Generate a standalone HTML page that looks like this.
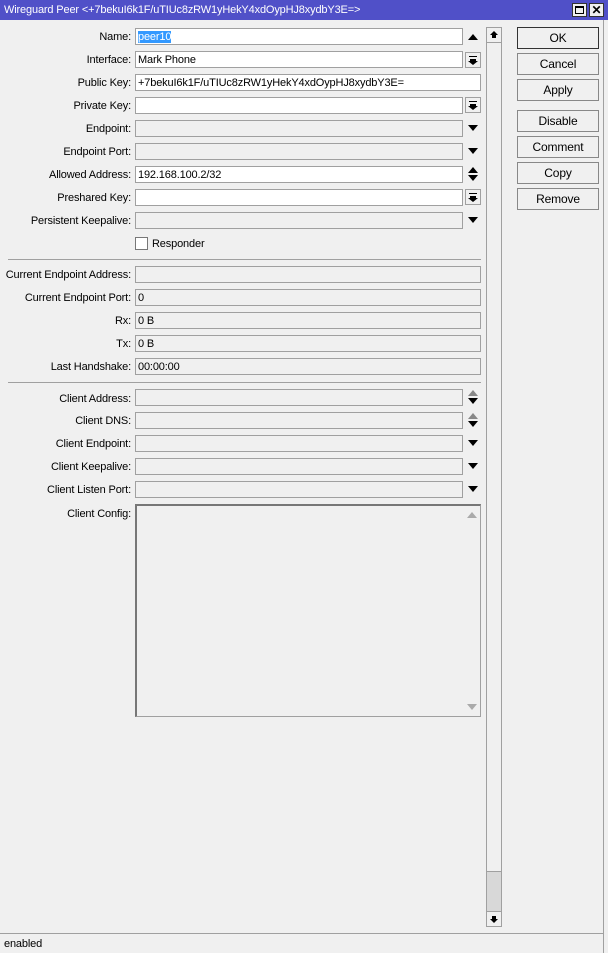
<!DOCTYPE html><html><head><style>
*{margin:0;padding:0;box-sizing:border-box}
body{width:608px;height:953px;background:#f0f0f0;font:11px "Liberation Sans",sans-serif;color:#000;position:relative;overflow:hidden;letter-spacing:-0.15px}
.t{position:absolute;left:0;top:0;width:608px;height:20px;background:#5050c8;color:#fff;padding:4px 0 0 4px;font-size:11px}
.wb{position:absolute;top:3px;width:15px;height:14px;background:#f0f0f0;border:1px solid #333}
.l{position:absolute;right:477px;text-align:right;white-space:nowrap}
.f{position:absolute;left:135px;height:17px;border:1px solid #a0a0a0;background:#fff;padding:2px 2px;white-space:nowrap;overflow:hidden}
.d{background:#f0f0f0}
.ar{position:absolute;left:466px;width:14px;height:14px}
.dd{position:absolute;left:465px;width:16px;height:16px;border:1px solid #a0a0a0;background:#f0f0f0}
.sep{position:absolute;left:8px;width:473px;height:1px;background:#a0a0a0}
.b{position:absolute;left:517px;width:82px;height:22px;border:1px solid #888;background:#f0f0f0;text-align:center;line-height:20px;font-size:12px}
</style></head><body>
<div class="t">Wireguard Peer &lt;+7bekuI6k1F/uTIUc8zRW1yHekY4xdOypHJ8xydbY3E=&gt;</div>
<div class="wb" style="left:572px"><div style="position:absolute;left:2px;top:2px;width:9px;height:8px;border:1px solid #000;border-top-width:2px"></div></div>
<div class="wb" style="left:589px;text-align:center;line-height:12px;font-weight:bold;font-size:12px">✕</div>

<div class="l" style="top:31px">Name:</div><div class="f" style="top:28px;width:328px"><span style="background:#3399ff;color:#fff">peer10</span></div>
<svg class="ar" style="top:30px" viewBox="0 0 14 14"><path d="M2 10h10L7 4z"/></svg>
<div class="l" style="top:54px">Interface:</div><div class="f" style="top:51px;width:328px">Mark Phone</div>
<div class="dd" style="top:52px"><svg width="14" height="14" viewBox="0 0 14 14"><path d="M3 3h8v1H3zM4 6h6v2h2L7 12 2 8h2z"/></svg></div>
<div class="l" style="top:77px">Public Key:</div><div class="f" style="top:74px;width:346px">+7bekuI6k1F/uTIUc8zRW1yHekY4xdOypHJ8xydbY3E=</div>
<div class="l" style="top:100px">Private Key:</div><div class="f" style="top:97px;width:328px"></div>
<div class="dd" style="top:97px"><svg width="14" height="14" viewBox="0 0 14 14"><path d="M3 3h8v1H3zM4 6h6v2h2L7 12 2 8h2z"/></svg></div>
<div class="l" style="top:123px">Endpoint:</div><div class="f d" style="top:120px;width:328px"></div>
<svg class="ar" style="top:121px" viewBox="0 0 14 14"><path d="M2 4h10L7 10z"/></svg>
<div class="l" style="top:146px">Endpoint Port:</div><div class="f d" style="top:143px;width:328px"></div>
<svg class="ar" style="top:144px" viewBox="0 0 14 14"><path d="M2 4h10L7 10z"/></svg>
<div class="l" style="top:169px">Allowed Address:</div><div class="f" style="top:166px;width:328px">192.168.100.2/32</div>
<svg class="ar" style="top:167px" viewBox="0 0 14 14"><path d="M2 6h10L7 0zM2 8h10L7 14z"/></svg>
<div class="l" style="top:192px">Preshared Key:</div><div class="f" style="top:189px;width:328px"></div>
<div class="dd" style="top:189px"><svg width="14" height="14" viewBox="0 0 14 14"><path d="M3 3h8v1H3zM4 6h6v2h2L7 12 2 8h2z"/></svg></div>
<div class="l" style="top:215px">Persistent Keepalive:</div><div class="f d" style="top:212px;width:328px"></div>
<svg class="ar" style="top:213px" viewBox="0 0 14 14"><path d="M2 4h10L7 10z"/></svg>
<div style="position:absolute;left:135px;top:237px;width:13px;height:13px;border:1px solid #777;background:#fff"></div>
<div style="position:absolute;left:152px;top:238px">Responder</div>
<div class="sep" style="top:259px"></div>
<div class="l" style="top:269px">Current Endpoint Address:</div><div class="f d" style="top:266px;width:346px"></div>
<div class="l" style="top:292px">Current Endpoint Port:</div><div class="f d" style="top:289px;width:346px">0</div>
<div class="l" style="top:315px">Rx:</div><div class="f d" style="top:312px;width:346px">0 B</div>
<div class="l" style="top:338px">Tx:</div><div class="f d" style="top:335px;width:346px">0 B</div>
<div class="l" style="top:361px">Last Handshake:</div><div class="f d" style="top:358px;width:346px">00:00:00</div>
<div class="sep" style="top:382px"></div>
<div class="l" style="top:393px">Client Address:</div><div class="f d" style="top:389px;width:328px"></div>
<svg class="ar" style="top:390px" viewBox="0 0 14 14"><path d="M2 6h10L7 0z" fill="#888"/><path d="M2 8h10L7 14z"/></svg>
<div class="l" style="top:415px">Client DNS:</div><div class="f d" style="top:412px;width:328px"></div>
<svg class="ar" style="top:413px" viewBox="0 0 14 14"><path d="M2 6h10L7 0z" fill="#888"/><path d="M2 8h10L7 14z"/></svg>
<div class="l" style="top:438px">Client Endpoint:</div><div class="f d" style="top:435px;width:328px"></div>
<svg class="ar" style="top:436px" viewBox="0 0 14 14"><path d="M2 4h10L7 10z"/></svg>
<div class="l" style="top:461px">Client Keepalive:</div><div class="f d" style="top:458px;width:328px"></div>
<svg class="ar" style="top:459px" viewBox="0 0 14 14"><path d="M2 4h10L7 10z"/></svg>
<div class="l" style="top:484px">Client Listen Port:</div><div class="f d" style="top:481px;width:328px"></div>
<svg class="ar" style="top:482px" viewBox="0 0 14 14"><path d="M2 4h10L7 10z"/></svg>
<div class="l" style="top:508px">Client Config:</div>
<div class="f d" style="top:504px;width:346px;height:213px;border-top:2px solid #777;border-left:2px solid #777"></div>
<svg style="position:absolute;left:465px;top:509px" width="14" height="12" viewBox="0 0 14 12"><path d="M2 9h10L7 3z" fill="#aaa"/></svg>
<svg style="position:absolute;left:465px;top:701px" width="14" height="12" viewBox="0 0 14 12"><path d="M2 3h10L7 9z" fill="#aaa"/></svg>

<div style="position:absolute;left:486px;top:27px;width:16px;height:900px;border:1px solid #a0a0a0;background:#f0f0f0"></div>
<div style="position:absolute;left:486px;top:27px;width:16px;height:16px;border:1px solid #a0a0a0"><svg width="14" height="14" viewBox="0 0 14 14"><path d="M3 7h8L7 3zM5 7h4v3H5z"/></svg></div>
<div style="position:absolute;left:486px;top:871px;width:16px;height:41px;border:1px solid #a0a0a0;background:#d8d8d8"></div>
<div style="position:absolute;left:486px;top:911px;width:16px;height:16px;border:1px solid #a0a0a0"><svg width="14" height="14" viewBox="0 0 14 14"><path d="M5 4h4v3H5zM3 7h8L7 11z"/></svg></div>

<div class="b" style="top:27px;border:1px solid #333">OK</div>
<div class="b" style="top:53px">Cancel</div>
<div class="b" style="top:79px">Apply</div>
<div class="b" style="top:110px">Disable</div>
<div class="b" style="top:136px">Comment</div>
<div class="b" style="top:162px">Copy</div>
<div class="b" style="top:188px">Remove</div>

<div style="position:absolute;left:0;top:933px;width:603px;height:1px;background:#a0a0a0"></div>
<div style="position:absolute;left:603px;top:20px;width:1px;height:933px;background:#a0a0a0"></div>
<div style="position:absolute;left:4px;top:938px">enabled</div>
</body></html>
